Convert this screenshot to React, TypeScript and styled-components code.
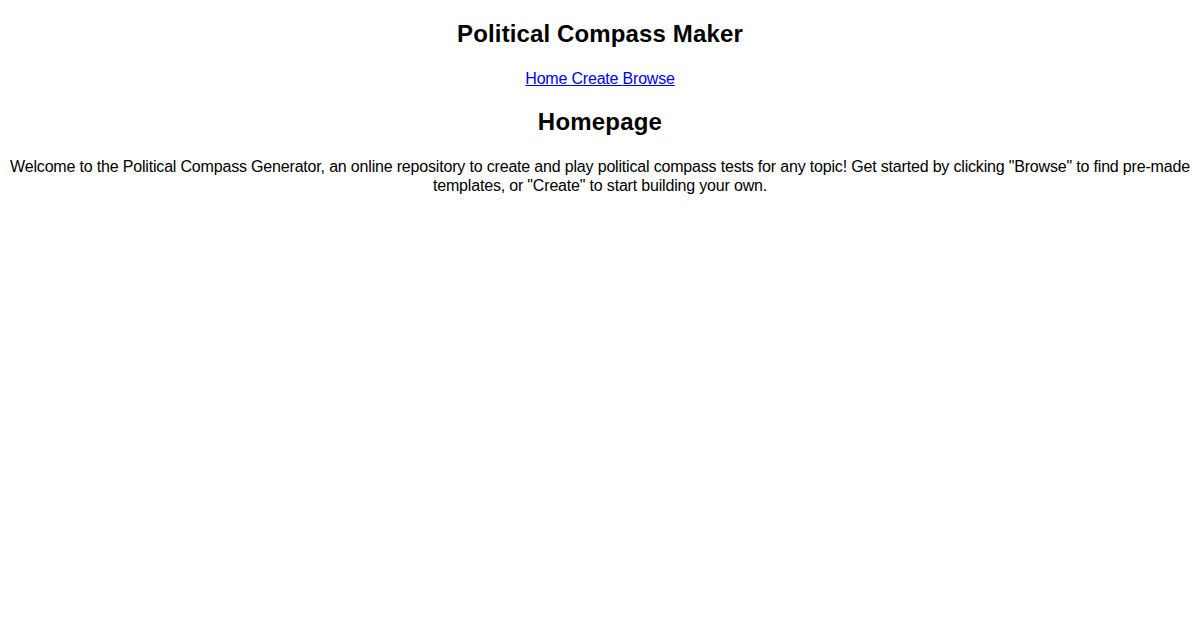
import styled, { createGlobalStyle } from "styled-components";

const GlobalStyle = createGlobalStyle`
    body {
        margin: 8px;
        font-family: "Liberation Sans", Arial, sans-serif;
        background: #fff;
        color: #000;
    }
`;

const Page = styled.div`
    text-align: center;
`;

const Title = styled.h2`
    font-size: 24px;
    line-height: 28px;
    font-weight: bold;
    letter-spacing: 0.13px;
    margin: 12px 0 21px;
`;

const Nav = styled.nav`
    font-size: 16px;
    line-height: 19px;
    letter-spacing: -0.2px;

    a {
        color: #0000ee;
        text-decoration: underline;
    }
`;

const Heading = styled.h2`
    font-size: 24px;
    line-height: 28px;
    font-weight: bold;
    letter-spacing: 0.2px;
    margin: 20px 0;
`;

const Intro = styled.p`
    font-size: 16px;
    line-height: 19px;
    letter-spacing: -0.18px;
    margin: 21px 0 20px;
`;

export default function App() {
    return (
        <Page>
            <GlobalStyle />
            <Title>Political Compass Maker</Title>
            <Nav>
                <a href="#">Home </a>
                <a href="#">Create </a>
                <a href="#">Browse</a>
            </Nav>
            <Heading>Homepage</Heading>
            <Intro>
                Welcome to the Political Compass Generator, an online repository to create and play political
                compass tests for any topic! Get started by clicking "Browse" to find pre-made templates, or
                "Create" to start building your own.
            </Intro>
        </Page>
    );
}
